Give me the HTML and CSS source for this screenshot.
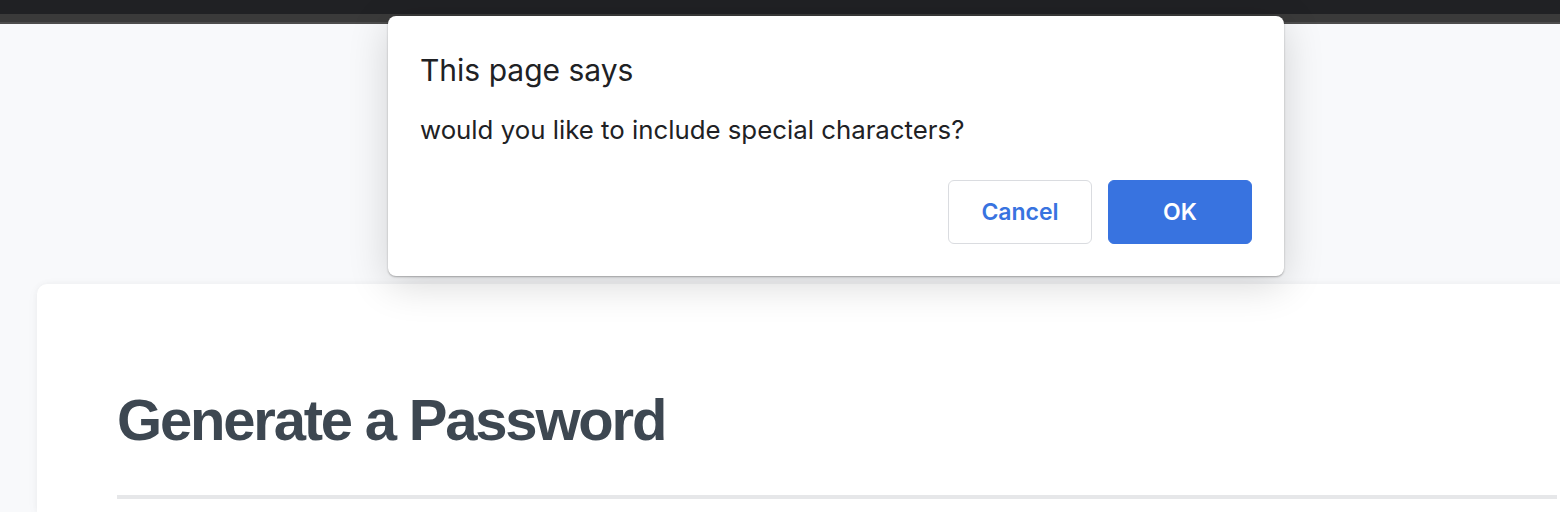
FILE: index.html
```html
<!DOCTYPE html>
<html lang="en">
<head>
<meta charset="utf-8">
<title>Password Generator</title>
<link rel="stylesheet" href="styles.css">
</head>
<body>
  <div class="topbar"></div>
  <div class="tabstrip"></div>
  <main class="page">
    <section class="card">
      <h1 class="title">Generate a Password</h1>
      <hr class="divider">
    </section>
  </main>

  <div class="dialog" role="dialog">
    <div class="dialog-title">This page says</div>
    <div class="dialog-message">would you like to include special characters?</div>
    <div class="dialog-actions">
      <button class="btn btn-cancel">Cancel</button>
      <button class="btn btn-ok">OK</button>
    </div>
  </div>
</body>
</html>
```

FILE: styles.css
```css
html, body {
  margin: 0;
  padding: 0;
}
body {
  width: 1560px;
  height: 512px;
  overflow: hidden;
  background: #f8f9fb;
  font-family: "Liberation Sans", Arial, sans-serif;
  position: relative;
}
.topbar {
  height: 14px;
  background: #202124;
}
.tabstrip {
  height: 8px;
  background: #3a3a3a;
  border-bottom: 2px solid #4d4d4d;
}
.page {
  padding: 260px 0 0 37px;
}
.card {
  width: 1440px;
  padding: 103px 80px 0 80px;
  height: 125px;
  background: #ffffff;
  border-radius: 10px 10px 0 0;
  box-shadow: 0 0 6px rgba(0, 0, 0, 0.04), 0 2px 14px rgba(0, 0, 0, 0.03);
}
.title {
  margin: 0;
  font-family: "Liberation Sans", Arial, sans-serif;
  font-weight: 700;
  font-size: 58px;
  line-height: 66px;
  letter-spacing: -2.2px;
  color: #3d4751;
}
.divider {
  margin: 42px 0 0 0;
  border: none;
  height: 4px;
  background: #e6e7e9;
}
.dialog {
  position: absolute;
  left: 388px;
  top: 16px;
  width: 832px;
  height: 224px;
  padding: 36px 32px 0 32px;
  background: #ffffff;
  border-radius: 8px;
  box-shadow: 0 1px 2px rgba(0, 0, 0, 0.3), 0 8px 40px rgba(0, 0, 0, 0.16);
  font-family: Inter, "Noto Sans", sans-serif;
  color: #202124;
  display: flex;
  flex-direction: column;
}
.dialog-title {
  font-size: 30px;
  line-height: 36px;
}
.dialog-message {
  margin-top: 26px;
  font-size: 25.8px;
  line-height: 32px;
}
.dialog-actions {
  margin-top: 34px;
  display: flex;
  justify-content: flex-end;
  gap: 16px;
}
.btn {
  width: 144px;
  height: 64px;
  border-radius: 6px;
  font-family: Inter, "Noto Sans", sans-serif;
  font-size: 23px;
  font-weight: 600;
  cursor: pointer;
}
.btn-cancel {
  background: #ffffff;
  border: 1px solid #dadce0;
  color: #3873e0;
}
.btn-ok {
  background: #3873e0;
  border: 1px solid #3873e0;
  color: #ffffff;
}
```
